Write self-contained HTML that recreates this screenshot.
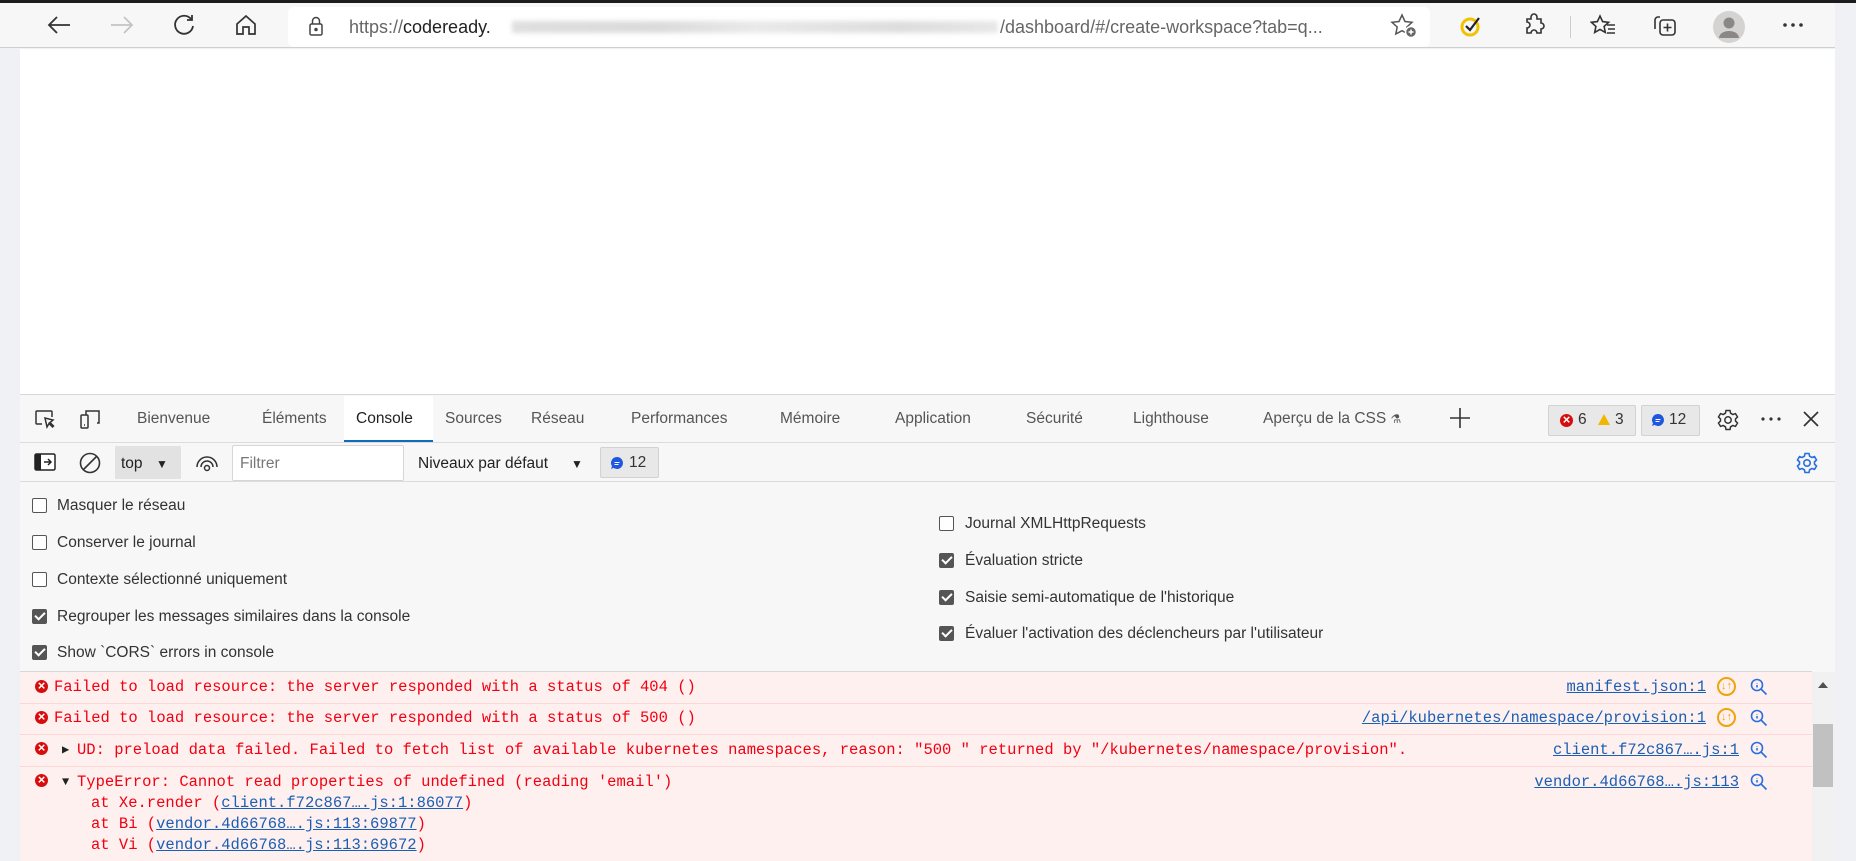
<!DOCTYPE html>
<html><head><meta charset="utf-8"><style>
*{margin:0;padding:0;box-sizing:border-box}
body{width:1856px;height:861px;overflow:hidden;background:#f0f1f4;font-family:"Liberation Sans",sans-serif;position:relative}
.a{position:absolute}
.t{position:absolute;font-size:15.5px;color:#333;white-space:nowrap;line-height:18px}
.m{position:absolute;font-family:"Liberation Mono",monospace;font-size:15.5px;white-space:nowrap;line-height:18px;color:#f00010}
.lk{color:#1a5fb4;text-decoration:underline}
.cb{position:absolute;width:15px;height:15px;border:1.5px solid #555;border-radius:2px;background:#fff}
.cb.on{background:#555}
.cb.on:after{content:"";position:absolute;left:3.5px;top:0px;width:4px;height:8px;border:solid #fff;border-width:0 2px 2px 0;transform:rotate(45deg)}
.ei{position:absolute;width:13px;height:13px;border-radius:50%;background:#d70d0d}
.ei:after{content:"×";position:absolute;left:0;top:-3px;width:13px;text-align:center;color:#fff;font-size:13px;font-weight:bold;line-height:18px}
.wi{position:absolute;width:19px;height:19px;border-radius:50%;border:2px solid #f0a30a;color:#f0a30a;font-size:11px;text-align:center;line-height:15px;font-weight:bold}
</style></head><body>
<div class="a" style="left:0;top:0;width:1856px;height:3px;background:#1c1c1c"></div>
<div class="a" style="left:0;top:3px;width:1835px;height:45px;background:#f7f7f7;border-bottom:1px solid #cfcfcf"></div>
<svg class="a" style="left:46px;top:14px" width="26" height="22" viewBox="0 0 26 22" fill="none" stroke="#333" stroke-width="1.8"><path d="M24 11H3M11 3L3 11l8 8"/></svg>
<svg class="a" style="left:109px;top:14px" width="26" height="22" viewBox="0 0 26 22" fill="none" stroke="#c4c4c4" stroke-width="1.8"><path d="M2 11h21M15 3l8 8-8 8"/></svg>
<svg class="a" style="left:172px;top:13px" width="24" height="24" viewBox="0 0 24 24" fill="none" stroke="#333" stroke-width="1.8"><path d="M19 6A9 9 0 1 0 21 13"/><path d="M20 2v5h-5"/></svg>
<svg class="a" style="left:234px;top:13px" width="24" height="24" viewBox="0 0 24 24" fill="none" stroke="#333" stroke-width="1.7"><path d="M3 11L12 3l9 8v10h-6v-7h-6v7H3z"/></svg>
<div class="a" style="left:288px;top:7px;width:1142px;height:40px;background:#fff;border-radius:6px"></div>
<svg class="a" style="left:308px;top:15px" width="16" height="22" viewBox="0 0 16 22" fill="none" stroke="#444" stroke-width="1.5"><rect x="2" y="9" width="12" height="11" rx="1.5"/><path d="M4.5 9V6a3.5 3.5 0 0 1 7 0v3"/><circle cx="8" cy="14.5" r="1" fill="#444"/></svg>
<div class="t" style="left:349px;top:17px;font-size:18px;color:#666;line-height:20px">https://<span style="color:#222">codeready.</span></div>
<div class="a" style="left:512px;top:21px;width:486px;height:12px;background:linear-gradient(90deg,#d4d4d4,#cfcfcf 30%,#e2e2e2 50%,#d2d2d2 80%,#e0e0e0);filter:blur(2.5px);opacity:.75"></div>
<div class="t" style="left:1000px;top:17px;font-size:18px;color:#666;line-height:20px">/dashboard/#/create-workspace?tab=q...</div>
<svg class="a" style="left:1390px;top:13px" width="28" height="26" viewBox="0 0 28 26" fill="none" stroke="#555" stroke-width="1.5"><path d="M12 2l3 6.5 7 .8-5.2 4.8 1.4 7L12 17.7 5.8 21l1.4-7L2 9.3l7-.8z"/><circle cx="21" cy="19" r="5.5" fill="#666" stroke="#fff"/><path d="M21 16.5v5M18.5 19h5" stroke="#fff"/></svg>
<svg class="a" style="left:1459px;top:14px" width="26" height="24" viewBox="0 0 26 24"><circle cx="11" cy="13" r="8" fill="none" stroke="#f2c200" stroke-width="3"/><path d="M7 12l4 4 9-12" fill="none" stroke="#222" stroke-width="2.2"/></svg>
<svg class="a" style="left:1522px;top:13px" width="24" height="24" viewBox="0 0 24 24" fill="none" stroke="#333" stroke-width="1.6"><path d="M9 4a3 3 0 0 1 6 0v2h4v4a3 3 0 0 1 0 6v4h-4a3 3 0 0 0-6 0H5v-5a3 3 0 0 0 0-6V6h4z"/></svg>
<div class="a" style="left:1570px;top:16px;width:1px;height:22px;background:#ccc"></div>
<svg class="a" style="left:1590px;top:14px" width="28" height="24" viewBox="0 0 28 24" fill="none" stroke="#333" stroke-width="1.6"><path d="M10 2l2.6 5.6 6 .7-4.5 4.1 1.2 6L10 15.4 4.7 18.4l1.2-6L1.4 8.3l6-.7z"/><path d="M17 11h8M18 15h7M17 19h8"/></svg>
<svg class="a" style="left:1653px;top:13px" width="26" height="26" viewBox="0 0 26 26" fill="none" stroke="#333" stroke-width="1.6"><path d="M7 4H5a3 3 0 0 0-3 3v9"/><rect x="7" y="7" width="15" height="15" rx="3"/><path d="M14.5 10.5v8M10.5 14.5h8"/></svg>
<svg class="a" style="left:1713px;top:11px" width="32" height="32" viewBox="0 0 32 32"><circle cx="16" cy="16" r="16" fill="#d5d3d1"/><circle cx="16" cy="12" r="5.5" fill="#8a8886"/><path d="M6 27a10 7 0 0 1 20 0z" fill="#8a8886"/></svg>
<svg class="a" style="left:1781px;top:22px" width="24" height="6" viewBox="0 0 24 6" fill="#333"><circle cx="4" cy="3" r="1.8"/><circle cx="12" cy="3" r="1.8"/><circle cx="20" cy="3" r="1.8"/></svg>
<div class="a" style="left:20px;top:49px;width:1815px;height:345px;background:#fff"></div>
<div class="a" style="left:20px;top:394px;width:1815px;height:467px;background:#f7f7f7"></div>
<div class="a" style="left:20px;top:394px;width:1815px;height:1px;background:#d8d8d8"></div>
<div class="a" style="left:20px;top:442px;width:1815px;height:1px;background:#dcdcdc"></div>
<svg class="a" style="left:34px;top:409px" width="22" height="20" viewBox="0 0 22 20" fill="none" stroke="#333" stroke-width="1.5"><path d="M8 15H3a1 1 0 0 1-1-1V3a1 1 0 0 1 1-1h14a1 1 0 0 1 1 1v5"/><path d="M11 9l2 9 2-3.5 3.5 3.5 1-1-3.5-3.5L19 11z"/></svg>
<svg class="a" style="left:79px;top:408px" width="22" height="22" viewBox="0 0 22 22" fill="none" stroke="#333" stroke-width="1.5"><rect x="2" y="7" width="7" height="13" rx="1"/><path d="M7 7V3h13v12h-2"/><path d="M5 17h1"/></svg>
<div class="t" style="left:137px;top:410px;color:#555">Bienvenue</div>
<div class="t" style="left:262px;top:410px;color:#555">Éléments</div>
<div class="a" style="left:344px;top:396px;width:89px;height:46px;background:#fff;border-bottom:2px solid #0f6cbd"></div>
<div class="t" style="left:356px;top:410px;color:#222">Console</div>
<div class="t" style="left:445px;top:410px;color:#555">Sources</div>
<div class="t" style="left:531px;top:410px;color:#555">Réseau</div>
<div class="t" style="left:631px;top:410px;color:#555">Performances</div>
<div class="t" style="left:780px;top:410px;color:#555">Mémoire</div>
<div class="t" style="left:895px;top:410px;color:#555">Application</div>
<div class="t" style="left:1026px;top:410px;color:#555">Sécurité</div>
<div class="t" style="left:1133px;top:410px;color:#555">Lighthouse</div>
<div class="t" style="left:1263px;top:410px;color:#555">Aperçu de la CSS <span style="font-size:12px">⚗</span></div>
<svg class="a" style="left:1449px;top:407px" width="22" height="22" viewBox="0 0 22 22" stroke="#333" stroke-width="1.6"><path d="M11 1v20M1 11h20"/></svg>
<div class="a" style="left:1548px;top:405px;width:88px;height:31px;background:#e8e8e8;border:1px solid #d2d2d2;border-radius:2px"></div>
<div class="ei" style="left:1560px;top:414px"></div>
<div class="t" style="left:1578px;top:411px;color:#333">6</div>
<svg class="a" style="left:1597px;top:413px" width="14" height="13" viewBox="0 0 14 13"><path d="M7 1l6 11H1z" fill="#f2b600"/></svg>
<div class="t" style="left:1615px;top:411px;color:#333">3</div>
<div class="a" style="left:1641px;top:405px;width:59px;height:31px;background:#e8e8e8;border:1px solid #d2d2d2;border-radius:2px"></div>
<svg class="a" style="left:1651px;top:413px" width="14" height="14" viewBox="0 0 14 14"><path d="M7 1a6 6 0 1 1-3.5 10.9L1 13l1-2.7A6 6 0 0 1 7 1z" fill="#1f57e0"/><path d="M4.5 6.5h5M4.5 8.5h4" stroke="#fff" stroke-width="1"/></svg>
<div class="t" style="left:1669px;top:411px;color:#333">12</div>
<svg class="a" style="left:1716px;top:408px" width="24" height="24" viewBox="0 0 24 24" fill="none" stroke="#333" stroke-width="1.5"><circle cx="12" cy="12" r="3.2"/><path d="M10 2.5h4l.6 2.7 2.3 1.3 2.6-.9 2 3.4-2 1.9v2.2l2 1.9-2 3.4-2.6-.9-2.3 1.3-.6 2.7h-4l-.6-2.7-2.3-1.3-2.6.9-2-3.4 2-1.9v-2.2l-2-1.9 2-3.4 2.6.9 2.3-1.3z"/></svg>
<svg class="a" style="left:1759px;top:416px" width="24" height="6" viewBox="0 0 24 6" fill="#333"><circle cx="4" cy="3" r="1.6"/><circle cx="12" cy="3" r="1.6"/><circle cx="20" cy="3" r="1.6"/></svg>
<svg class="a" style="left:1802px;top:410px" width="18" height="18" viewBox="0 0 18 18" stroke="#333" stroke-width="1.7"><path d="M2 2l14 14M16 2L2 16"/></svg>
<div class="a" style="left:20px;top:481px;width:1815px;height:1px;background:#dcdcdc"></div>
<svg class="a" style="left:34px;top:453px" width="22" height="18" viewBox="0 0 22 18"><rect x="1" y="1" width="20" height="16" rx="1.5" fill="#fff" stroke="#222" stroke-width="1.5"/><rect x="1" y="1" width="6" height="16" fill="#222"/><path d="M10 9h7M14 6l3 3-3 3" stroke="#222" stroke-width="1.5" fill="none"/></svg>
<svg class="a" style="left:78px;top:451px" width="24" height="24" viewBox="0 0 24 24" fill="none" stroke="#333" stroke-width="1.6"><circle cx="12" cy="12" r="9.5"/><path d="M18.5 5.5l-13 13"/></svg>
<div class="a" style="left:115px;top:446px;width:66px;height:33px;background:#e2e2e2"></div>
<div class="t" style="left:121px;top:455px;color:#222">top</div>
<div class="t" style="left:156px;top:455px;color:#222;font-size:12px">▼</div>
<svg class="a" style="left:195px;top:454px" width="24" height="20" viewBox="0 0 24 20" fill="none" stroke="#333" stroke-width="1.5"><path d="M2 13a10 10 0 0 1 20 0"/><path d="M6 13a6 6 0 0 1 12 0"/><circle cx="12" cy="14" r="2.5"/></svg>
<div class="a" style="left:232px;top:445px;width:172px;height:36px;background:#fff;border:1px solid #d6d6d6;border-radius:2px"></div>
<div class="t" style="left:240px;top:455px;color:#777">Filtrer</div>
<div class="t" style="left:418px;top:455px;color:#222">Niveaux par défaut</div>
<div class="t" style="left:571px;top:455px;color:#222;font-size:12px">▼</div>
<div class="a" style="left:600px;top:447px;width:59px;height:31px;background:#e8e8e8;border:1px solid #d2d2d2;border-radius:2px"></div>
<svg class="a" style="left:610px;top:456px" width="14" height="14" viewBox="0 0 14 14"><path d="M7 1a6 6 0 1 1-3.5 10.9L1 13l1-2.7A6 6 0 0 1 7 1z" fill="#1f57e0"/><path d="M4.5 6.5h5M4.5 8.5h4" stroke="#fff" stroke-width="1"/></svg>
<div class="t" style="left:629px;top:454px;color:#333">12</div>
<svg class="a" style="left:1795px;top:451px" width="24" height="24" viewBox="0 0 24 24" fill="none" stroke="#2a6fdb" stroke-width="1.6"><circle cx="12" cy="12" r="3.2"/><path d="M10 2.5h4l.6 2.7 2.3 1.3 2.6-.9 2 3.4-2 1.9v2.2l2 1.9-2 3.4-2.6-.9-2.3 1.3-.6 2.7h-4l-.6-2.7-2.3-1.3-2.6.9-2-3.4 2-1.9v-2.2l-2-1.9 2-3.4 2.6.9 2.3-1.3z"/></svg>
<div class="cb" style="left:32px;top:498px"></div><div class="t" style="left:57px;top:497px">Masquer le réseau</div>
<div class="cb" style="left:32px;top:535px"></div><div class="t" style="left:57px;top:534px">Conserver le journal</div>
<div class="cb" style="left:32px;top:572px"></div><div class="t" style="left:57px;top:571px">Contexte sélectionné uniquement</div>
<div class="cb on" style="left:32px;top:609px"></div><div class="t" style="left:57px;top:608px">Regrouper les messages similaires dans la console</div>
<div class="cb on" style="left:32px;top:645px"></div><div class="t" style="left:57px;top:644px">Show `CORS` errors in console</div>
<div class="cb" style="left:939px;top:516px"></div><div class="t" style="left:965px;top:515px">Journal XMLHttpRequests</div>
<div class="cb on" style="left:939px;top:553px"></div><div class="t" style="left:965px;top:552px">Évaluation stricte</div>
<div class="cb on" style="left:939px;top:590px"></div><div class="t" style="left:965px;top:589px">Saisie semi-automatique de l'historique</div>
<div class="cb on" style="left:939px;top:626px"></div><div class="t" style="left:965px;top:625px">Évaluer l'activation des déclencheurs par l'utilisateur</div>
<div class="a" style="left:20px;top:671px;width:1792px;height:190px;background:#fff0f0;border-top:1px solid #d8d8d8"></div>
<div class="a" style="left:20px;top:703px;width:1792px;height:1px;background:#ffd6d6"></div>
<div class="a" style="left:20px;top:734px;width:1792px;height:1px;background:#ffd6d6"></div>
<div class="a" style="left:20px;top:766px;width:1792px;height:1px;background:#ffd6d6"></div>
<div class="ei" style="left:35px;top:680px"></div>
<div class="m" style="left:54px;top:678px">Failed to load resource: the server responded with a status of 404 ()</div>
<div class="ei" style="left:35px;top:711px"></div>
<div class="m" style="left:54px;top:709px">Failed to load resource: the server responded with a status of 500 ()</div>
<div class="ei" style="left:35px;top:742px"></div>
<div class="m" style="left:62px;top:741px;color:#222;font-size:12px">▶</div>
<div class="m" style="left:77px;top:741px">UD: preload data failed. Failed to fetch list of available kubernetes namespaces, reason: "500 " returned by "/kubernetes/namespace/provision".</div>
<div class="ei" style="left:35px;top:774px"></div>
<div class="m" style="left:62px;top:773px;color:#222;font-size:12px">▼</div>
<div class="m" style="left:77px;top:773px">TypeError: Cannot read properties of undefined (reading 'email')</div>
<div class="m" style="left:91px;top:794px">at Xe.render (<span class="lk">client.f72c867….js:1:86077</span>)</div>
<div class="m" style="left:91px;top:815px">at Bi (<span class="lk">vendor.4d66768….js:113:69877</span>)</div>
<div class="m" style="left:91px;top:836px">at Vi (<span class="lk">vendor.4d66768….js:113:69672</span>)</div>
<div class="m lk" style="right:150px;top:678px">manifest.json:1</div>
<div class="m lk" style="right:150px;top:709px">/api/kubernetes/namespace/provision:1</div>
<div class="m lk" style="right:117px;top:741px">client.f72c867….js:1</div>
<div class="m lk" style="right:117px;top:773px">vendor.4d66768….js:113</div>
<div class="wi" style="left:1717px;top:677px">↓↑</div>
<div class="wi" style="left:1717px;top:708px">↓↑</div>
<svg class="a" style="left:1750px;top:678px" width="18" height="18" viewBox="0 0 18 18" fill="none" stroke="#2a6fdb" stroke-width="1.6"><circle cx="7" cy="7" r="5.5"/><path d="M11 11l5.5 5.5M7 5v.5M7 7v2.5"/></svg>
<svg class="a" style="left:1750px;top:709px" width="18" height="18" viewBox="0 0 18 18" fill="none" stroke="#2a6fdb" stroke-width="1.6"><circle cx="7" cy="7" r="5.5"/><path d="M11 11l5.5 5.5M7 5v.5M7 7v2.5"/></svg>
<svg class="a" style="left:1750px;top:741px" width="18" height="18" viewBox="0 0 18 18" fill="none" stroke="#2a6fdb" stroke-width="1.6"><circle cx="7" cy="7" r="5.5"/><path d="M11 11l5.5 5.5M7 5v.5M7 7v2.5"/></svg>
<svg class="a" style="left:1750px;top:773px" width="18" height="18" viewBox="0 0 18 18" fill="none" stroke="#2a6fdb" stroke-width="1.6"><circle cx="7" cy="7" r="5.5"/><path d="M11 11l5.5 5.5M7 5v.5M7 7v2.5"/></svg>
<div class="a" style="left:1812px;top:672px;width:23px;height:189px;background:#f1f1f1"></div>
<div class="a" style="left:1818px;top:682px;width:0;height:0;border-left:5px solid transparent;border-right:5px solid transparent;border-bottom:6px solid #505050"></div>
<div class="a" style="left:1813px;top:724px;width:20px;height:63px;background:#c1c1c1"></div>
</body></html>
